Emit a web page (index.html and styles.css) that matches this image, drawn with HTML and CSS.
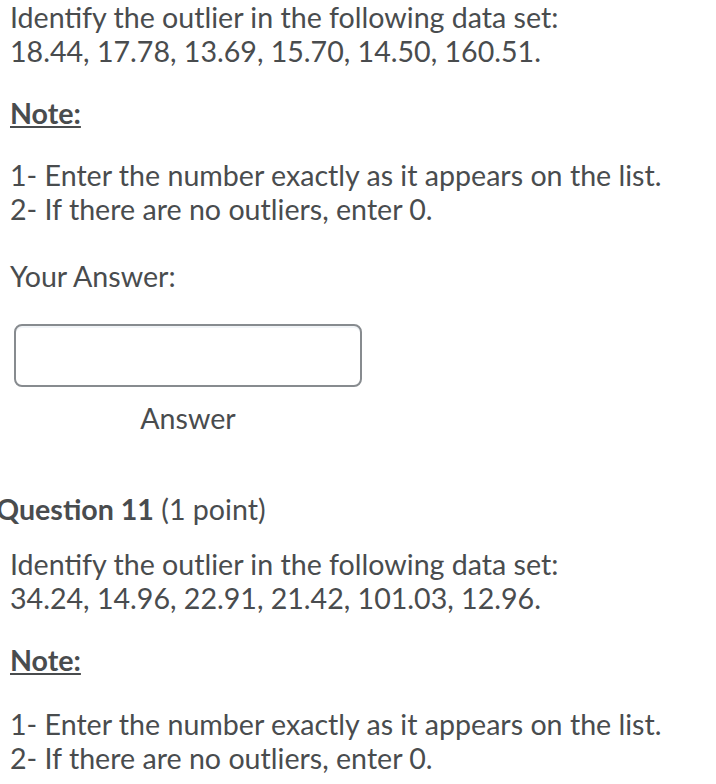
FILE: index.html
```html
<!DOCTYPE html>
<html>
<head>
<meta charset="utf-8">
<link rel="stylesheet" href="styles.css">
</head>
<body>
<div class="page">
  <div class="qbody">
    <p class="para">Identify the outlier in the following data set:<br>18.44, 17.78, 13.69, 15.70, 14.50, 160.51.</p>
    <p class="para"><span class="note">Note:</span></p>
    <p class="para para-last">1- Enter the number exactly as it appears on the list.<br>2- If there are no outliers, enter 0.</p>
    <p class="para prompt">Your Answer:</p>
    <div class="answer-box"></div>
    <div class="answer-label">Answer</div>
  </div>
  <h2 class="qtitle"><strong>Question 11</strong> <span class="pts">(1 point)</span></h2>
  <div class="qbody next">
    <p class="para">Identify the outlier in the following data set:<br>34.24, 14.96, 22.91, 21.42, 101.03, 12.96.</p>
    <p class="para note-para"><span class="note">Note:</span></p>
    <p class="para">1- Enter the number exactly as it appears on the list.<br>2- If there are no outliers, enter 0.</p>
  </div>
</div>
</body>
</html>
```

FILE: styles.css
```css
html, body {
  margin: 0;
  padding: 0;
  background: #ffffff;
}
body {
  font-family: Lato, "Liberation Sans", sans-serif;
  font-size: 28.6px;
  line-height: 34px;
  color: #494c4e;
  overflow: hidden;
}
.page {
  width: 716px;
  height: 784px;
  overflow: hidden;
}
.qbody {
  padding-left: 10px;
}
.para {
  margin: 0 0 28px 0;
}
.para-last {
  margin-bottom: 33px;
}
.prompt {
  margin-bottom: 0;
}
.next .para {
  margin-bottom: 28px;
}
.next .note-para {
  margin-bottom: 30px;
}
.note {
  font-weight: 700;
  text-decoration: underline;
}
.answer-box {
  width: 344px;
  height: 59px;
  margin: 31px 0 0 4px;
  border: 2px solid #878b8f;
  border-radius: 8px;
  box-shadow: inset 0 2px 0 #f1f4f7;
}
.answer-label {
  width: 356px;
  text-align: center;
  margin-top: 14px;
}
.qtitle {
  margin: 57px 0 21px -4px;
  font-size: 28.6px;
  font-weight: 400;
  line-height: 34px;
}
.qtitle strong {
  font-weight: 700;
}
```
